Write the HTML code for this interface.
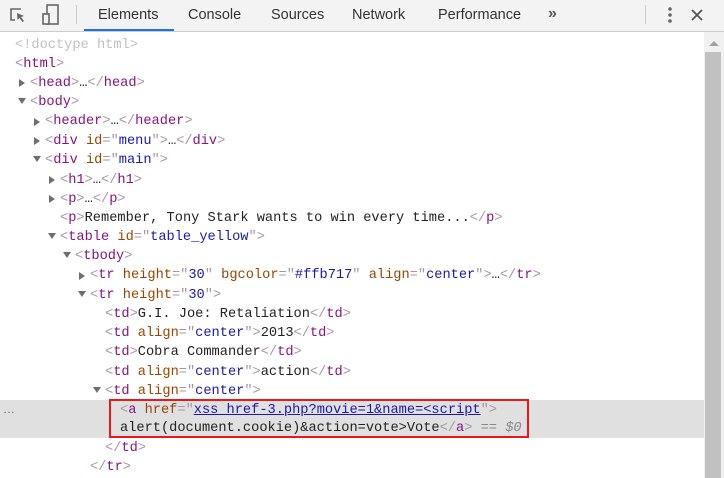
<!DOCTYPE html>
<html><head><style>
body{margin:0;width:724px;height:478px;background:#fff;overflow:hidden;position:relative;font-family:"Liberation Sans",sans-serif}
.bar{position:absolute;left:0;top:0;width:724px;height:31px;background:#f3f3f3;border-bottom:1px solid #ccc}
.tab{position:absolute;top:7px;font-size:14.5px;color:#333}
.sep{position:absolute;top:5px;width:1px;height:19px;background:#ccc}
.ln{position:absolute;height:19px;line-height:19px;font-family:"Liberation Mono",monospace;font-size:13.67px;white-space:pre;color:#222}
.t{color:#881280}.b{color:#a894a6}.n{color:#994500}.v{color:#1a1aa6}.d{color:#c0c0c0}
.ar{position:absolute;width:0;height:0}
.r{border-top:4px solid transparent;border-bottom:4px solid transparent;border-left:6px solid #6e6e6e;margin-top:1px}
.dn{border-left:4px solid transparent;border-right:4px solid transparent;border-top:6px solid #6e6e6e;margin-left:1px}
</style></head><body>
<div class="bar"></div>
<svg style="position:absolute;left:8px;top:6px" width="20" height="20" viewBox="0 0 20 20"><path d="M13 3H3v11h4" fill="none" stroke="#666" stroke-width="1.6"/><path d="M9 7l7 3-3 1 3 4-1.5 1-3-4-2 2z" fill="#666"/></svg>
<svg style="position:absolute;left:40px;top:4px" width="22" height="22" viewBox="0 0 22 22"><rect x="7" y="1" width="11" height="19" fill="none" stroke="#666" stroke-width="1.6"/><rect x="3" y="10" width="6" height="10" fill="#f3f3f3" stroke="#666" stroke-width="1.6"/></svg>
<div class="sep" style="left:76px"></div>
<div class="tab" style="left:98px;color:#333">Elements</div>
<div style="position:absolute;left:84px;top:29px;width:90px;height:2px;background:#1a73e8"></div>
<div class="tab" style="left:188px">Console</div>
<div class="tab" style="left:271px">Sources</div>
<div class="tab" style="left:352px">Network</div>
<div class="tab" style="left:438px">Performance</div>
<div class="tab" style="left:548px;top:5px;font-size:16px;font-weight:bold;color:#555">»</div>
<div class="sep" style="left:645px"></div>
<svg style="position:absolute;left:665px;top:5px" width="10" height="20"><circle cx="5" cy="4" r="1.8" fill="#666"/><circle cx="5" cy="10" r="1.8" fill="#666"/><circle cx="5" cy="16" r="1.8" fill="#666"/></svg>
<svg style="position:absolute;left:691px;top:9px" width="12" height="12"><path d="M1 1L11 11M11 1L1 11" stroke="#555" stroke-width="1.8"/></svg>
<div style="position:absolute;left:704px;top:32px;width:20px;height:446px;background:#f1f1f1"></div>
<div class="ar" style="left:709px;top:41px;border-left:5px solid transparent;border-right:5px solid transparent;border-bottom:5px solid #a3a3a3"></div>
<div style="position:absolute;left:705px;top:52px;width:16px;height:426px;background:#c1c1c1"></div>
<div style="position:absolute;left:0;top:400px;width:704px;height:38px;background:#e0e0e0"></div>
<div style="position:absolute;left:3px;top:402px;font-size:12px;color:#666;letter-spacing:1px">…</div>
<div style="position:absolute;left:109px;top:399px;width:416px;height:35px;border:2px solid #e8181d"></div>

<div class="ln d" style="left:15px;top:36px">&lt;!doctype html&gt;</div>
<div class="ln" style="left:15px;top:55px"><span class="b">&lt;</span><span class="t">html</span><span class="b">&gt;</span></div>
<div class="ar r" style="left:19px;top:78px"></div>
<div class="ln" style="left:30px;top:74px"><span class="b">&lt;</span><span class="t">head</span><span class="b">&gt;</span>…<span class="b">&lt;/</span><span class="t">head</span><span class="b">&gt;</span></div>
<div class="ar dn" style="left:17px;top:98px"></div>
<div class="ln" style="left:30px;top:93px"><span class="b">&lt;</span><span class="t">body</span><span class="b">&gt;</span></div>
<div class="ar r" style="left:34px;top:117px"></div>
<div class="ln" style="left:45px;top:112px"><span class="b">&lt;</span><span class="t">header</span><span class="b">&gt;</span>…<span class="b">&lt;/</span><span class="t">header</span><span class="b">&gt;</span></div>
<div class="ar r" style="left:34px;top:136px"></div>
<div class="ln" style="left:45px;top:132px"><span class="b">&lt;</span><span class="t">div </span><span class="n">id</span><span class="b">="</span><span class="v">menu</span><span class="b">"&gt;</span>…<span class="b">&lt;/</span><span class="t">div</span><span class="b">&gt;</span></div>
<div class="ar dn" style="left:32px;top:156px"></div>
<div class="ln" style="left:45px;top:151px"><span class="b">&lt;</span><span class="t">div </span><span class="n">id</span><span class="b">="</span><span class="v">main</span><span class="b">"&gt;</span></div>
<div class="ar r" style="left:49px;top:175px"></div>
<div class="ln" style="left:60px;top:171px"><span class="b">&lt;</span><span class="t">h1</span><span class="b">&gt;</span>…<span class="b">&lt;/</span><span class="t">h1</span><span class="b">&gt;</span></div>
<div class="ar r" style="left:49px;top:194px"></div>
<div class="ln" style="left:60px;top:190px"><span class="b">&lt;</span><span class="t">p</span><span class="b">&gt;</span>…<span class="b">&lt;/</span><span class="t">p</span><span class="b">&gt;</span></div>
<div class="ln" style="left:60px;top:209px"><span class="b">&lt;</span><span class="t">p</span><span class="b">&gt;</span>Remember, Tony Stark wants to win every time...<span class="b">&lt;/</span><span class="t">p</span><span class="b">&gt;</span></div>
<div class="ar dn" style="left:47px;top:233px"></div>
<div class="ln" style="left:60px;top:228px"><span class="b">&lt;</span><span class="t">table </span><span class="n">id</span><span class="b">="</span><span class="v">table_yellow</span><span class="b">"&gt;</span></div>
<div class="ar dn" style="left:62px;top:252px"></div>
<div class="ln" style="left:75px;top:247px"><span class="b">&lt;</span><span class="t">tbody</span><span class="b">&gt;</span></div>
<div class="ar r" style="left:79px;top:271px"></div>
<div class="ln" style="left:90px;top:266px"><span class="b">&lt;</span><span class="t">tr </span><span class="n">height</span><span class="b">="</span><span class="v">30</span><span class="b">"</span> <span class="n">bgcolor</span><span class="b">="</span><span class="v">#ffb717</span><span class="b">"</span> <span class="n">align</span><span class="b">="</span><span class="v">center</span><span class="b">"&gt;</span>…<span class="b">&lt;/</span><span class="t">tr</span><span class="b">&gt;</span></div>
<div class="ar dn" style="left:77px;top:291px"></div>
<div class="ln" style="left:90px;top:286px"><span class="b">&lt;</span><span class="t">tr </span><span class="n">height</span><span class="b">="</span><span class="v">30</span><span class="b">"&gt;</span></div>
<div class="ln" style="left:105px;top:305px"><span class="b">&lt;</span><span class="t">td</span><span class="b">&gt;</span>G.I. Joe: Retaliation<span class="b">&lt;/</span><span class="t">td</span><span class="b">&gt;</span></div>
<div class="ln" style="left:105px;top:324px"><span class="b">&lt;</span><span class="t">td </span><span class="n">align</span><span class="b">="</span><span class="v">center</span><span class="b">"&gt;</span>2013<span class="b">&lt;/</span><span class="t">td</span><span class="b">&gt;</span></div>
<div class="ln" style="left:105px;top:343px"><span class="b">&lt;</span><span class="t">td</span><span class="b">&gt;</span>Cobra Commander<span class="b">&lt;/</span><span class="t">td</span><span class="b">&gt;</span></div>
<div class="ln" style="left:105px;top:363px"><span class="b">&lt;</span><span class="t">td </span><span class="n">align</span><span class="b">="</span><span class="v">center</span><span class="b">"&gt;</span>action<span class="b">&lt;/</span><span class="t">td</span><span class="b">&gt;</span></div>
<div class="ar dn" style="left:92px;top:387px"></div>
<div class="ln" style="left:105px;top:382px"><span class="b">&lt;</span><span class="t">td </span><span class="n">align</span><span class="b">="</span><span class="v">center</span><span class="b">"&gt;</span></div>
<div class="ln" style="left:120px;top:401px"><span class="b">&lt;</span><span class="t">a </span><span class="n">href</span><span class="b">="</span><span class="v" style="text-decoration:underline;color:#1a1aa6">xss_href-3.php?movie=1&amp;name=&lt;script</span><span class="b">"&gt;</span></div>
<div class="ln" style="left:120px;top:419px">alert(document.cookie)&amp;action=vote&gt;Vote<span class="b">&lt;/</span><span class="t">a</span><span class="b">&gt;</span><span style="color:#888"> == </span><span style="color:#888;font-style:italic">$0</span></div>
<div class="ln" style="left:105px;top:439px"><span class="b">&lt;/</span><span class="t">td</span><span class="b">&gt;</span></div>
<div class="ln" style="left:90px;top:458px"><span class="b">&lt;/</span><span class="t">tr</span><span class="b">&gt;</span></div>
</body></html>
